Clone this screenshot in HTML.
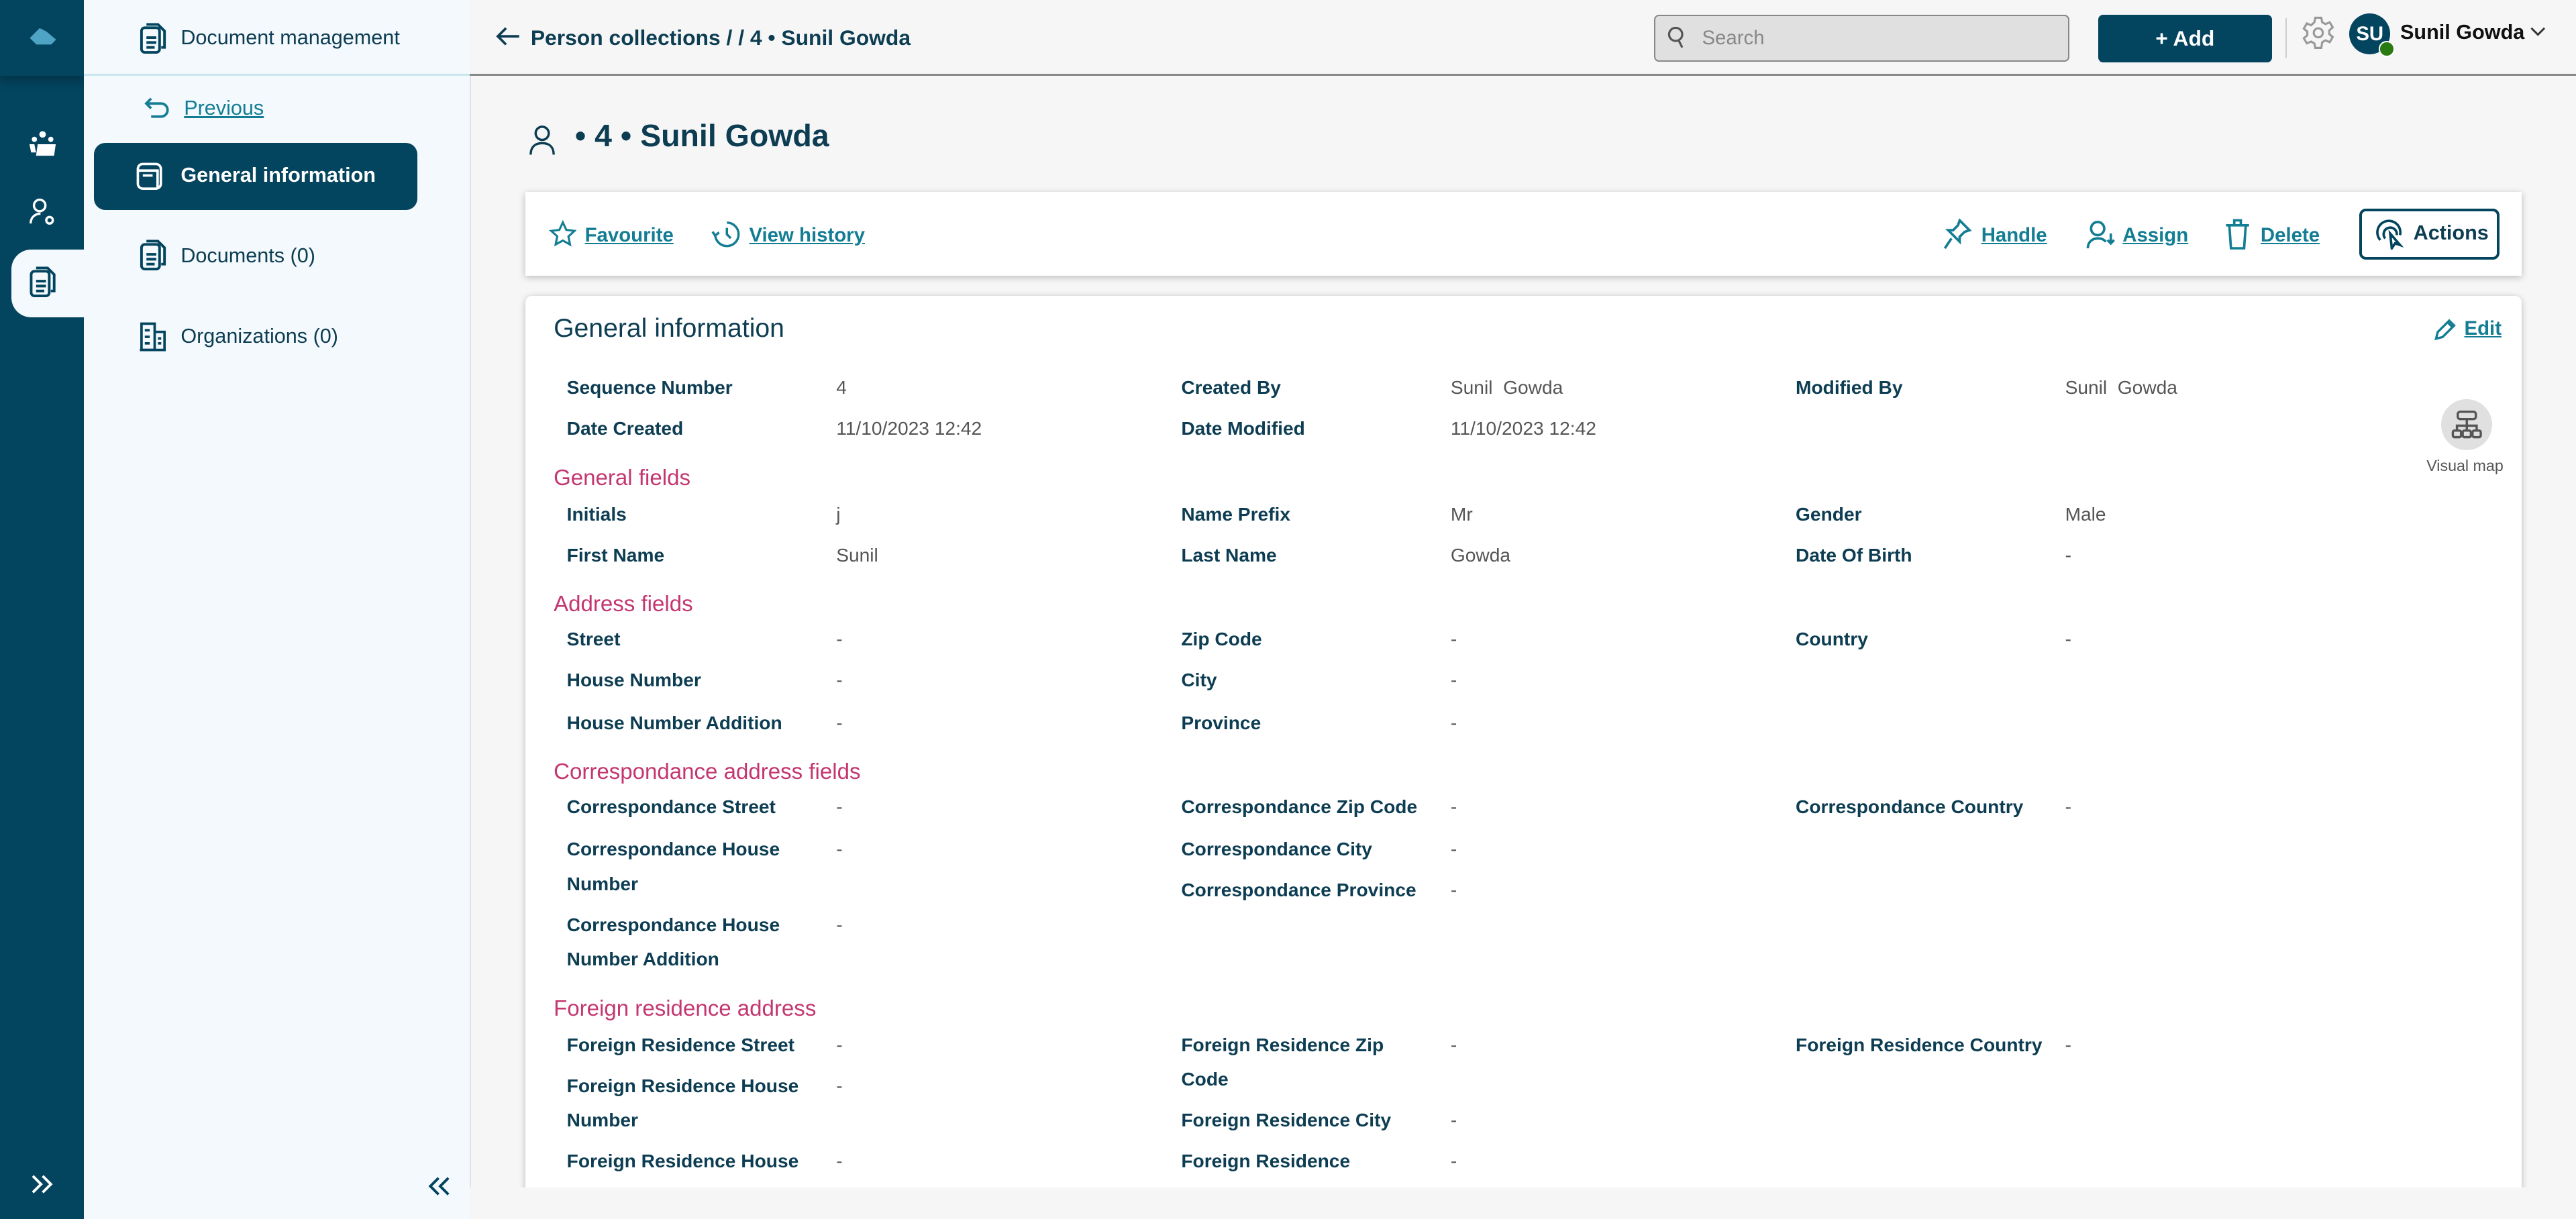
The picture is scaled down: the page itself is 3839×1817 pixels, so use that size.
<!DOCTYPE html>
<html><head><meta charset="utf-8"><style>
html,body{margin:0;padding:0;}
body{width:3839px;height:1817px;overflow:hidden;background:#f6f6f6;}
#w{zoom:2.44834;width:1568px;height:742px;position:relative;overflow:hidden;font-family:"Liberation Sans",sans-serif;color:#0d3d52;background:#f6f6f6;}
.a{position:absolute;white-space:nowrap;}
.rail{left:0;top:0;width:51px;height:742px;background:#03445e;}
.side{left:51px;top:0;width:235px;height:742px;background:#f3f9fd;border-right:1px solid #dde3e8;}
.top{left:286px;top:0;width:1282px;height:45px;background:#f6f6f6;border-bottom:1.5px solid #888;}
.card{background:#fff;box-shadow:0 1px 4px rgba(0,0,0,.25);}
.lnk{color:#137d94;text-decoration:underline;font-size:12px;font-weight:bold;}
.l{font-size:11.5px;font-weight:bold;color:#0d3d52;line-height:16px;}
.v{font-size:11.5px;color:#555;line-height:16px;}
.h{font-size:13.5px;color:#c43670;line-height:16px;}
svg{position:absolute;}
</style></head><body><div id="w">
<div class="a rail"></div>
<div class="a" style="left:0;top:0;width:51px;height:46px;box-shadow:0 3px 5px rgba(0,0,0,.25);background:#03445e"></div>
<svg style="left:17px;top:15px" width="18" height="14" viewBox="0 0 18 14"><path d="M1 8 L7 2 L11 4 L17 9 L14 12 L5 12 Z" fill="#4fa3c4"/></svg>
<svg style="left:16px;top:79px" width="20" height="20" viewBox="0 0 20 20" fill="#fff"><circle cx="10" cy="3" r="2"/><circle cx="5" cy="6" r="1.6"/><circle cx="15" cy="6" r="1.6"/><path d="M2 9h3l1 5H3z"/><path d="M7 9h11l-1 7H6z"/></svg>
<svg style="left:17px;top:120px" width="18" height="18" viewBox="0 0 18 18" fill="none" stroke="#fff" stroke-width="1.4"><circle cx="7" cy="5" r="3.5"/><path d="M1.5 16c0-4 3-6 6-6"/><circle cx="13" cy="14" r="2"/></svg>
<div class="a" style="left:7px;top:152px;width:44px;height:41px;background:#f3f9fd;border-radius:12px 0 0 12px"></div>
<svg style="left:18px;top:162px" width="16" height="20" viewBox="0 0 16 20" fill="none" stroke="#03445e" stroke-width="1.6"><rect x="1" y="3" width="11" height="15" rx="2"/><path d="M4 1h7l4 4v10h-2"/><path d="M4 9h6M4 12h6M4 15h5"/></svg>
<svg style="left:18px;top:714px" width="16" height="14" viewBox="0 0 16 14" fill="none" stroke="#fff" stroke-width="1.6"><path d="M2 2l5 5-5 5M8 2l5 5-5 5"/></svg>

<div class="a side"></div>
<div class="a" style="left:51px;top:45px;width:235px;height:1px;background:#c9e6ee"></div>
<svg style="left:84px;top:14px" width="18" height="20" viewBox="0 0 16 20" fill="none" stroke="#03445e" stroke-width="1.6"><rect x="1" y="3" width="11" height="15" rx="2"/><path d="M4 1h7l4 4v10h-2"/><path d="M4 9h6M4 12h6M4 15h5"/></svg>
<div class="a" style="left:110px;top:15px;font-size:12.5px;line-height:16px;">Document management</div>
<svg style="left:87px;top:58px" width="18" height="18" viewBox="0 0 18 18" fill="none" stroke="#137d94" stroke-width="1.5"><path d="M5 2L2 5l3 3"/><path d="M2 5h9a4 4 0 010 8H5"/></svg>
<div class="a lnk" style="left:112px;top:59px;font-weight:normal;font-size:12.5px">Previous</div>
<div class="a" style="left:57px;top:87px;width:197px;height:41px;background:#03445e;border-radius:7px"></div>
<svg style="left:83px;top:99px" width="17" height="17" viewBox="0 0 17 17" fill="none" stroke="#fff" stroke-width="1.5"><rect x="1" y="1" width="14" height="15" rx="3"/><path d="M1 5h12v11"/><path d="M4 8h6"/></svg>
<div class="a" style="left:110px;top:99px;font-size:12.5px;color:#fff;font-weight:bold;line-height:16px">General information</div>
<svg style="left:84px;top:146px" width="18" height="20" viewBox="0 0 16 20" fill="none" stroke="#03445e" stroke-width="1.6"><rect x="1" y="3" width="11" height="15" rx="2"/><path d="M4 1h7l4 4v10h-2"/><path d="M4 9h6M4 12h6M4 15h5"/></svg>
<div class="a" style="left:110px;top:148px;font-size:12.5px;line-height:16px">Documents (0)</div>
<svg style="left:84px;top:196px" width="18" height="18" viewBox="0 0 18 18" fill="none" stroke="#03445e" stroke-width="1.5"><rect x="2" y="1" width="8" height="16"/><path d="M10 6h6v11H1"/><path d="M4 5h3M4 9h3M4 13h3M12 10h2M12 13h2"/></svg>
<div class="a" style="left:110px;top:197px;font-size:12.5px;line-height:16px">Organizations (0)</div>
<svg style="left:259px;top:715px" width="16" height="14" viewBox="0 0 16 14" fill="none" stroke="#03445e" stroke-width="1.6"><path d="M8 2L3 7l5 5M14 2L9 7l5 5"/></svg>

<div class="a top"></div>
<svg style="left:301px;top:15px" width="16" height="14" viewBox="0 0 16 14" fill="none" stroke="#0d3d52" stroke-width="1.5"><path d="M7 2L2 7l5 5M2 7h13"/></svg>
<div class="a" style="left:323px;top:15px;font-size:13px;font-weight:bold;line-height:16px">Person collections / / 4 • Sunil Gowda</div>
<div class="a" style="left:1007px;top:9px;width:251px;height:27px;background:#e0e0e0;border:1px solid #888;border-radius:3px"></div>
<svg style="left:1015px;top:16px" width="12" height="14" viewBox="0 0 12 14" fill="none" stroke="#555" stroke-width="1.3"><circle cx="5" cy="5" r="4"/><path d="M7 9l2 4"/></svg>
<div class="a" style="left:1036px;top:15px;font-size:12px;color:#888;line-height:16px">Search</div>
<div class="a" style="left:1277px;top:9px;width:106px;height:29px;background:#03445e;border-radius:3px;color:#fff;font-weight:bold;font-size:13px;text-align:center;line-height:29px">+ Add</div>
<div class="a" style="left:1391px;top:11px;width:1px;height:24px;background:#ccc"></div>
<svg style="left:1400px;top:9px" width="22" height="22" viewBox="0 0 24 24" fill="none" stroke="#999" stroke-width="1.4"><circle cx="12" cy="12" r="3"/><path d="M10 2h4l.6 3 2.2 1.2 2.8-1.2 2 3.4-2.3 2v2.4l2.3 2-2 3.4-2.8-1.2-2.2 1.2L14 22h-4l-.6-3-2.2-1.2-2.8 1.2-2-3.4 2.3-2v-2.4l-2.3-2 2-3.4 2.8 1.2L9.4 5z"/></svg>
<div class="a" style="left:1430px;top:8px;width:25px;height:25px;border-radius:50%;background:#03445e;color:#fff;font-weight:bold;font-size:12px;text-align:center;line-height:25px">SU</div>
<div class="a" style="left:1448px;top:25px;width:8px;height:8px;border-radius:50%;background:#2a7a12;border:1px solid #fff"></div>
<div class="a" style="left:1461px;top:12px;font-size:12.5px;font-weight:bold;color:#111;line-height:16px">Sunil Gowda</div>
<svg style="left:1540px;top:15px" width="10" height="8" viewBox="0 0 10 8" fill="none" stroke="#333" stroke-width="1.2"><path d="M1 2l4 4 4-4"/></svg>

<svg style="left:321px;top:75px" width="18" height="20" viewBox="0 0 18 20" fill="none" stroke="#0d3d52" stroke-width="1.4"><circle cx="9" cy="6" r="4"/><path d="M2 19c0-5 3-7 7-7s7 2 7 7"/></svg>
<div class="a" style="left:350px;top:72px;font-size:19px;font-weight:bold;line-height:22px">• 4 • Sunil Gowda</div>

<div class="a card" style="left:320px;top:117px;width:1215px;height:51px"></div>
<svg style="left:334px;top:134px" width="17" height="17" viewBox="0 0 24 24" fill="none" stroke="#137d94" stroke-width="1.8"><path d="M12 2l3 6.5 7 .8-5.2 4.8 1.4 7L12 17.6 5.8 21l1.4-7L2 9.3l7-.8z"/></svg>
<div class="a lnk" style="left:356px;top:135px;line-height:16px">Favourite</div>
<svg style="left:433px;top:133px" width="19" height="19" viewBox="0 0 24 24" fill="none" stroke="#137d94" stroke-width="1.8"><path d="M3 12a9 9 0 109-9"/><path d="M1 10l2 3 3-2.5"/><path d="M12 7v5l3 3"/></svg>
<div class="a lnk" style="left:456px;top:135px;line-height:16px">View history</div>
<svg style="left:1183px;top:133px" width="18" height="19" viewBox="0 0 18 19" fill="none" stroke="#137d94" stroke-width="1.5"><path d="M10 1l6 6-3 1-3 3 0 3-7-7 3 0 3-3z"/><path d="M5 12l-4 6"/></svg>
<div class="a lnk" style="left:1206px;top:135px;line-height:16px">Handle</div>
<svg style="left:1270px;top:133px" width="19" height="19" viewBox="0 0 19 19" fill="none" stroke="#137d94" stroke-width="1.5"><circle cx="7" cy="6" r="4"/><path d="M1 18c0-4 3-6 6-6s4 1 5 2"/><path d="M15 9v6M13 13l2 2 2-2"/></svg>
<div class="a lnk" style="left:1292px;top:135px;line-height:16px">Assign</div>
<svg style="left:1354px;top:133px" width="16" height="19" viewBox="0 0 16 19" fill="none" stroke="#137d94" stroke-width="1.5"><path d="M1 4h14M6 4V1h4v3M3 4l1 14h8l1-14"/></svg>
<div class="a lnk" style="left:1376px;top:135px;line-height:16px">Delete</div>
<div class="a" style="left:1436px;top:127px;width:82px;height:28px;border:2px solid #03445e;border-radius:4px"></div>
<svg style="left:1446px;top:133px" width="18" height="19" viewBox="0 0 18 19" fill="none" stroke="#03445e" stroke-width="1.5"><path d="M3 13a7 7 0 1112 -3"/><path d="M6 12a4 4 0 117-2"/><path d="M9 9l1 9 2-3 3 1z"/></svg>
<div class="a" style="left:1469px;top:134px;font-size:12.5px;font-weight:bold;line-height:16px">Actions</div>

<div class="a card" style="left:320px;top:180px;width:1215px;height:570px;border-radius:4px"></div>
<div class="a" style="left:337px;top:191px;font-size:16px;line-height:18px">General information</div>
<svg style="left:1482px;top:193px" width="14" height="14" viewBox="0 0 14 14" fill="none" stroke="#137d94" stroke-width="1.4"><path d="M1 13l1-4 7-7 3 3-7 7z"/><path d="M8 3l3 3"/></svg>
<div class="a lnk" style="left:1500px;top:192px;line-height:16px">Edit</div>
<div class="a" style="left:1486px;top:243px;width:31px;height:31px;border-radius:50%;background:#e0e0e0"></div>
<svg style="left:1492px;top:249px" width="19" height="19" viewBox="0 0 19 19" fill="none" stroke="#555" stroke-width="1.4"><rect x="4" y="1.5" width="11" height="4.5" rx="1.5"/><path d="M9.5 6v4M3.5 13v-3h12v3M9.5 10v3"/><rect x="1" y="13" width="5" height="4" rx="1"/><rect x="7" y="13" width="5" height="4" rx="1"/><rect x="13" y="13" width="5" height="4" rx="1"/></svg>
<div class="a" style="left:1477px;top:278px;font-size:9.5px;color:#555">Visual map</div>

<div class="a l" style="left:345px;top:228px">Sequence Number</div><div class="a v" style="left:509px;top:228px">4</div>
<div class="a l" style="left:719px;top:228px">Created By</div><div class="a v" style="left:883px;top:228px">Sunil&nbsp; Gowda</div>
<div class="a l" style="left:1093px;top:228px">Modified By</div><div class="a v" style="left:1257px;top:228px">Sunil&nbsp; Gowda</div>
<div class="a l" style="left:345px;top:253px">Date Created</div><div class="a v" style="left:509px;top:253px">11/10/2023 12:42</div>
<div class="a l" style="left:719px;top:253px">Date Modified</div><div class="a v" style="left:883px;top:253px">11/10/2023 12:42</div>

<div class="a h" style="left:337px;top:283px">General fields</div>
<div class="a l" style="left:345px;top:305px">Initials</div><div class="a v" style="left:509px;top:305px">j</div>
<div class="a l" style="left:719px;top:305px">Name Prefix</div><div class="a v" style="left:883px;top:305px">Mr</div>
<div class="a l" style="left:1093px;top:305px">Gender</div><div class="a v" style="left:1257px;top:305px">Male</div>
<div class="a l" style="left:345px;top:330px">First Name</div><div class="a v" style="left:509px;top:330px">Sunil</div>
<div class="a l" style="left:719px;top:330px">Last Name</div><div class="a v" style="left:883px;top:330px">Gowda</div>
<div class="a l" style="left:1093px;top:330px">Date Of Birth</div><div class="a v" style="left:1257px;top:330px">-</div>

<div class="a h" style="left:337px;top:360px">Address fields</div>
<div class="a l" style="left:345px;top:381px">Street</div><div class="a v" style="left:509px;top:381px">-</div>
<div class="a l" style="left:719px;top:381px">Zip Code</div><div class="a v" style="left:883px;top:381px">-</div>
<div class="a l" style="left:1093px;top:381px">Country</div><div class="a v" style="left:1257px;top:381px">-</div>
<div class="a l" style="left:345px;top:406px">House Number</div><div class="a v" style="left:509px;top:406px">-</div>
<div class="a l" style="left:719px;top:406px">City</div><div class="a v" style="left:883px;top:406px">-</div>
<div class="a l" style="left:345px;top:432px">House Number Addition</div><div class="a v" style="left:509px;top:432px">-</div>
<div class="a l" style="left:719px;top:432px">Province</div><div class="a v" style="left:883px;top:432px">-</div>

<div class="a h" style="left:337px;top:462px">Correspondance address fields</div>
<div class="a l" style="left:345px;top:483px">Correspondance Street</div><div class="a v" style="left:509px;top:483px">-</div>
<div class="a l" style="left:719px;top:483px">Correspondance Zip Code</div><div class="a v" style="left:883px;top:483px">-</div>
<div class="a l" style="left:1093px;top:483px">Correspondance Country</div><div class="a v" style="left:1257px;top:483px">-</div>
<div class="a l" style="left:345px;top:509px">Correspondance House</div><div class="a v" style="left:509px;top:509px">-</div>
<div class="a l" style="left:345px;top:530px">Number</div>
<div class="a l" style="left:719px;top:509px">Correspondance City</div><div class="a v" style="left:883px;top:509px">-</div>
<div class="a l" style="left:719px;top:534px">Correspondance Province</div><div class="a v" style="left:883px;top:534px">-</div>
<div class="a l" style="left:345px;top:555px">Correspondance House</div><div class="a v" style="left:509px;top:555px">-</div>
<div class="a l" style="left:345px;top:576px">Number Addition</div>

<div class="a h" style="left:337px;top:606px">Foreign residence address</div>
<div class="a l" style="left:345px;top:628px">Foreign Residence Street</div><div class="a v" style="left:509px;top:628px">-</div>
<div class="a l" style="left:719px;top:628px">Foreign Residence Zip</div><div class="a v" style="left:883px;top:628px">-</div>
<div class="a l" style="left:719px;top:649px">Code</div>
<div class="a l" style="left:1093px;top:628px">Foreign Residence Country</div><div class="a v" style="left:1257px;top:628px">-</div>
<div class="a l" style="left:345px;top:653px">Foreign Residence House</div><div class="a v" style="left:509px;top:653px">-</div>
<div class="a l" style="left:345px;top:674px">Number</div>
<div class="a l" style="left:719px;top:674px">Foreign Residence City</div><div class="a v" style="left:883px;top:674px">-</div>
<div class="a l" style="left:345px;top:699px">Foreign Residence House</div><div class="a v" style="left:509px;top:699px">-</div>
<div class="a l" style="left:719px;top:699px">Foreign Residence</div><div class="a v" style="left:883px;top:699px">-</div>
<div class="a" style="left:286px;top:723px;width:1282px;height:19px;background:#f6f6f6"></div>
</div></body></html>
